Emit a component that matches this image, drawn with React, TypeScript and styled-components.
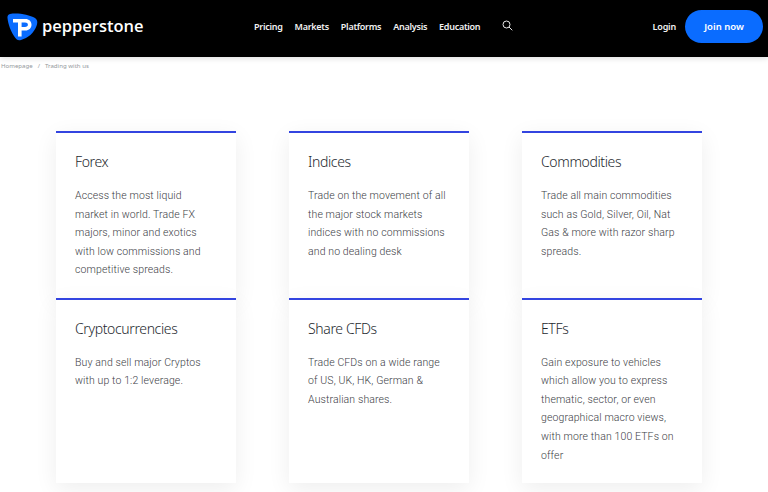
import React from "react";
import styled, { createGlobalStyle } from "styled-components";

const Global = createGlobalStyle`
  html, body { margin: 0; padding: 0; background: #fff; overflow: hidden; }
  body { font-family: Roboto, "Liberation Sans", sans-serif; }
`;

const Page = styled.div`
  width: 768px;
  height: 492px;
  overflow: hidden;
  display: flex;
  flex-direction: column;
`;

const Header = styled.header`
  height: 57px;
  flex: none;
  background: #000;
  display: flex;
  align-items: center;
  padding: 0 5px 4px 7px;
  box-sizing: border-box;
  box-shadow: 0 1px 6px rgba(0, 0, 0, 0.15);
`;

const Brand = styled.div`
  width: 247px;
  display: flex;
  align-items: center;
  gap: 4px;
  flex: none;
`;

const BrandName = styled.span`
  font-family: "Open Sans", sans-serif;
  font-size: 16.5px;
  font-weight: 600;
  color: #fff;
  position: relative;
  top: -1px;
`;

const Nav = styled.nav`
  display: flex;
  align-items: center;
  gap: 12px;
  flex: none;
`;

const NavLink = styled.a`
  font-family: "Noto Sans", sans-serif;
  font-size: 9px;
  font-weight: 600;
  letter-spacing: -0.27px;
  color: #f2f2f2;
`;

const SearchButton = styled.span`
  display: flex;
  margin-left: 22px;
  margin-top: -3px;
`;

const Actions = styled.div`
  margin-left: auto;
  display: flex;
  align-items: center;
  gap: 9px;
`;

const Login = styled.a`
  font-family: "Noto Sans", sans-serif;
  font-size: 9px;
  font-weight: 600;
  letter-spacing: -0.2px;
  color: #f2f2f2;
`;

const JoinButton = styled.a`
  width: 78px;
  height: 33px;
  border-radius: 17px;
  background: #0a6cff;
  color: #fff;
  display: flex;
  align-items: center;
  justify-content: center;
  font-family: "Noto Sans", sans-serif;
  font-size: 9.5px;
  font-weight: 600;
`;

const Breadcrumbs = styled.div`
  display: flex;
  gap: 5px;
  padding: 5px 0 0 1px;
  height: 16px;
  font-family: "Noto Sans", sans-serif;
  font-size: 6.1px;
  line-height: 8px;
  color: #94989c;
  flex: none;
`;

const Grid = styled.main`
  display: grid;
  grid-template-columns: repeat(3, 180px);
  grid-template-rows: 166.7px 185px;
  column-gap: 53px;
  margin: 53px 0 0 56px;
`;

const Card = styled.section`
  border-top: 2px solid #3344e0;
  background: #fff;
  box-shadow: 0 6px 22px rgba(0, 0, 0, 0.07);
  padding: 19px 19px 0;
  box-sizing: border-box;
`;

const Title = styled.h3`
  margin: 0 0 16px;
  font-family: "Noto Sans", sans-serif;
  font-size: 14px;
  font-weight: 300;
  letter-spacing: -0.37px;
  line-height: 19px;
  color: #24282e;
`;

const Body = styled.p`
  margin: 0;
  font-family: Roboto, sans-serif;
  font-size: 10.5px;
  font-weight: 300;
  line-height: 18.6px;
  color: #3c4046;
  letter-spacing: 0.12px;
`;

const cards = [
  { title: "Forex", lines: ["Access the most liquid", "market in world. Trade FX", "majors, minor and exotics", "with low commissions and", "competitive spreads."] },
  { title: "Indices", lines: ["Trade on the movement of all", "the major stock markets", "indices with no commissions", "and no dealing desk"] },
  { title: "Commodities", lines: ["Trade all main commodities", "such as Gold, Silver, Oil, Nat", "Gas & more with razor sharp", "spreads."] },
  { title: "Cryptocurrencies", lines: ["Buy and sell major Cryptos", "with up to 1:2 leverage."] },
  { title: "Share CFDs", lines: ["Trade CFDs on a wide range", "of US, UK, HK, German &", "Australian shares."] },
  { title: "ETFs", lines: ["Gain exposure to vehicles", "which allow you to express", "thematic, sector, or even", "geographical macro views,", "with more than 100 ETFs on", "offer"] },
];

const Logo = () => (
  <svg width="31" height="28" viewBox="0 0 31 28" aria-hidden="true">
    <path d="M3 1 C10 -0.5 22 1.5 28 5 C31 7 30.5 10 29.5 13 C27 20 21 25 14 27 C11 28 9.5 26.5 8 24.5 C4 19 1 11 0.5 5 C0.3 3 1 1.5 3 1 Z" fill="#0a6cff" />
    <path
      fillRule="evenodd"
      d="M6 6 H18.5 C22 6 24.5 8.4 24.5 11.7 C24.5 15 22 17.5 18.5 17.5 H14.6 V23.5 H11 V9.6 H6 Z M14.6 9.6 V14 H18 C19.8 14 20.9 13.1 20.9 11.8 C20.9 10.5 19.8 9.6 18 9.6 Z"
      fill="#fff"
    />
  </svg>
);

const SearchIcon = () => (
  <svg width="11" height="11" viewBox="0 0 11 11" fill="none" stroke="#e8e8e8" strokeWidth="1" aria-hidden="true">
    <circle cx="4.5" cy="4.5" r="3.5" />
    <path d="M7 7 L10.3 10.3" />
  </svg>
);

export default function App() {
  return (
    <Page>
      <Global />
      <Header>
        <Brand>
          <Logo />
          <BrandName>pepperstone</BrandName>
        </Brand>
        <Nav>
          {["Pricing", "Markets", "Platforms", "Analysis", "Education"].map((n) => (
            <NavLink key={n}>{n}</NavLink>
          ))}
        </Nav>
        <SearchButton>
          <SearchIcon />
        </SearchButton>
        <Actions>
          <Login>Login</Login>
          <JoinButton>Join now</JoinButton>
        </Actions>
      </Header>
      <Breadcrumbs>
        <span>Homepage</span>
        <span>/</span>
        <span>Trading with us</span>
      </Breadcrumbs>
      <Grid>
        {cards.map((c) => (
          <Card key={c.title}>
            <Title>{c.title}</Title>
            <Body>
              {c.lines.map((l, i) => (
                <React.Fragment key={i}>
                  {l}
                  {i < c.lines.length - 1 && <br />}
                </React.Fragment>
              ))}
            </Body>
          </Card>
        ))}
      </Grid>
    </Page>
  );
}
